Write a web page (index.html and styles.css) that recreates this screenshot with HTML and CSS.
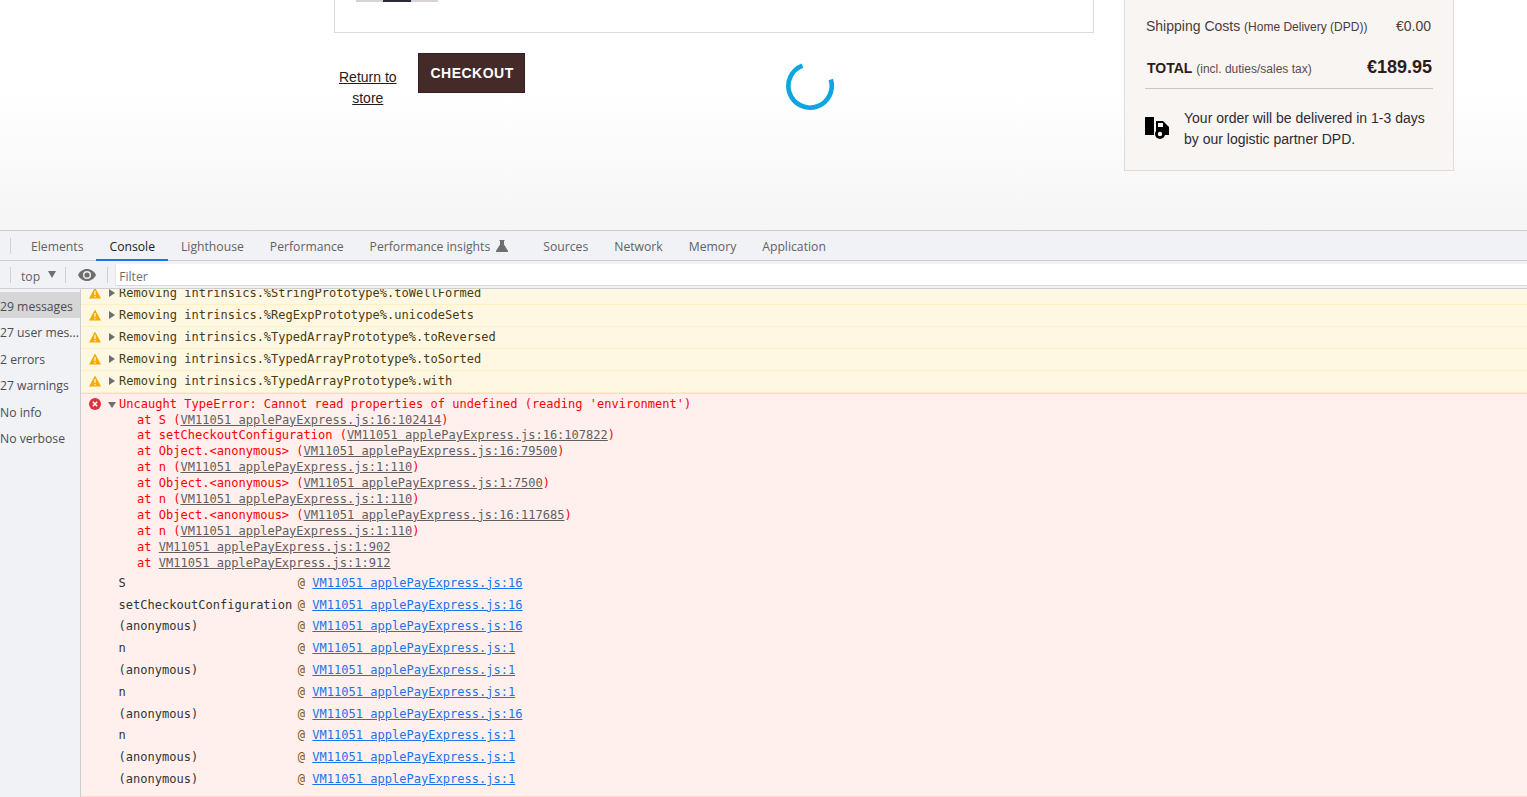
FILE: index.html
```html
<!DOCTYPE html>
<html lang="en">
<head>
    <meta charset="UTF-8">
    <title>Checkout - DevTools</title>
    <link rel="stylesheet" href="styles.css">
</head>
<body>
    <!-- Store page -->
    <div class="page">
        <div class="main-col">
            <div class="order-card">
                <div class="thumb"><span></span><span class="dark"></span><span></span></div>
            </div>
            <div class="checkout-row">
                <a href="#" class="return-link">Return to<br>store</a>
                <button class="checkout-btn">CHECKOUT</button>
                <svg class="spinner" width="48" height="48" viewBox="0 0 48 48"><path d="M44.8 17.5A21.7 21.7 0 1 1 16.5 3.6" fill="none" stroke="#0ea5e0" stroke-width="4.6"/></svg>
            </div>
        </div>
        <div class="summary">
            <div class="ship-row">
                <span>Shipping Costs <small>(Home Delivery (DPD))</small></span>
                <span>€0.00</span>
            </div>
            <div class="total-row">
                <span><b>TOTAL</b> <small>(incl. duties/sales tax)</small></span>
                <b class="total-price">€189.95</b>
            </div>
            <div class="delivery">
                <svg class="truck" width="24" height="24" viewBox="0 0 24 24">
                    <rect x="0" y="0" width="9" height="18"/>
                    <path d="M11 4h7l6 6v8H11z"/>
                    <rect x="13" y="6" width="5" height="4" fill="#f9f5f2"/>
                    <circle cx="15" cy="17" r="5" fill="#000"/>
                    <circle cx="15" cy="17" r="2.2" fill="#f9f5f2"/>
                </svg>
                <p>Your order will be delivered in 1-3 days<br>by our logistic partner DPD.</p>
            </div>
        </div>
    </div>

    <!-- DevTools -->
    <div class="devtools">
        <div class="tabs">
            <span class="sep"></span>
            <span class="tab">Elements</span>
            <span class="tab active">Console</span>
            <span class="tab">Lighthouse</span>
            <span class="tab">Performance</span>
            <span class="tab">Performance insights<svg class="flask" width="12" height="12" viewBox="0 0 12 12"><path d="M3.5 0h5v1H8v3.500l4 6.500v1H0v-1l4-6.500V1h-.5z" fill="#6e6e6e"/></svg></span>
            <span class="tab">Sources</span>
            <span class="tab">Network</span>
            <span class="tab">Memory</span>
            <span class="tab">Application</span>
        </div>
        <div class="toolbar">
            <span class="sep"></span>
            <span class="context">top</span>
            <span class="caret"></span>
            <span class="sep"></span>
            <svg class="eye" width="18" height="12" viewBox="0 0 18 12"><path d="M9 0c4 0 7.400 2.500 9 6-1.600 3.500-5 6-9 6s-7.400-2.500-9-6c1.600-3.500 5-6 9-6z" fill="#6e6e6e"/><circle cx="9" cy="6" r="4" fill="#f1f2f5"/><circle cx="9" cy="6" r="2.600" fill="#6e6e6e"/></svg>
            <span class="sep"></span>
            <div class="filter">Filter</div>
        </div>
        <div class="console">
            <div class="sidebar">
                <div class="side-item selected">29 messages</div>
                <div class="side-item">27 user mes...</div>
                <div class="side-item">2 errors</div>
                <div class="side-item">27 warnings</div>
                <div class="side-item">No info</div>
                <div class="side-item">No verbose</div>
            </div>
            <div class="messages">
                <div class="warn first"><svg class="warn-icon" width="12" height="12" viewBox="0 0 12 12"><path d="M6 .5l6 11H0z" fill="#f2ab00"/><path d="M5.400 4h1.200v4H5.400zM5.400 9h1.200v1.200H5.400z" fill="#fff"/></svg><i class="arrow"></i>Removing intrinsics.%StringPrototype%.toWellFormed</div>
                <div class="warn"><svg class="warn-icon" width="12" height="12" viewBox="0 0 12 12"><path d="M6 .5l6 11H0z" fill="#f2ab00"/><path d="M5.400 4h1.200v4H5.400zM5.400 9h1.200v1.200H5.400z" fill="#fff"/></svg><i class="arrow"></i>Removing intrinsics.%RegExpPrototype%.unicodeSets</div>
                <div class="warn"><svg class="warn-icon" width="12" height="12" viewBox="0 0 12 12"><path d="M6 .5l6 11H0z" fill="#f2ab00"/><path d="M5.400 4h1.200v4H5.400zM5.400 9h1.200v1.200H5.400z" fill="#fff"/></svg><i class="arrow"></i>Removing intrinsics.%TypedArrayPrototype%.toReversed</div>
                <div class="warn"><svg class="warn-icon" width="12" height="12" viewBox="0 0 12 12"><path d="M6 .5l6 11H0z" fill="#f2ab00"/><path d="M5.400 4h1.200v4H5.400zM5.400 9h1.200v1.200H5.400z" fill="#fff"/></svg><i class="arrow"></i>Removing intrinsics.%TypedArrayPrototype%.toSorted</div>
                <div class="warn"><svg class="warn-icon" width="12" height="12" viewBox="0 0 12 12"><path d="M6 .5l6 11H0z" fill="#f2ab00"/><path d="M5.400 4h1.200v4H5.400zM5.400 9h1.200v1.200H5.400z" fill="#fff"/></svg><i class="arrow"></i>Removing intrinsics.%TypedArrayPrototype%.with</div>
                <div class="error">
                    <div class="err-head"><svg class="err-icon" width="12" height="12" viewBox="0 0 12 12"><circle cx="6" cy="6" r="6" fill="#e0313a"/><path d="M3.800 3.800l4.400 4.400M8.200 3.800l-4.400 4.400" stroke="#fff" stroke-width="1.500"/></svg><i class="arrow open"></i>Uncaught TypeError: Cannot read properties of undefined (reading 'environment')</div>
                    <div class="trace">at S (<a href="#">VM11051 applePayExpress.js:16:102414</a>)</div>
                    <div class="trace">at setCheckoutConfiguration (<a href="#">VM11051 applePayExpress.js:16:107822</a>)</div>
                    <div class="trace">at Object.&lt;anonymous&gt; (<a href="#">VM11051 applePayExpress.js:16:79500</a>)</div>
                    <div class="trace">at n (<a href="#">VM11051 applePayExpress.js:1:110</a>)</div>
                    <div class="trace">at Object.&lt;anonymous&gt; (<a href="#">VM11051 applePayExpress.js:1:7500</a>)</div>
                    <div class="trace">at n (<a href="#">VM11051 applePayExpress.js:1:110</a>)</div>
                    <div class="trace">at Object.&lt;anonymous&gt; (<a href="#">VM11051 applePayExpress.js:16:117685</a>)</div>
                    <div class="trace">at n (<a href="#">VM11051 applePayExpress.js:1:110</a>)</div>
                    <div class="trace">at <a href="#">VM11051 applePayExpress.js:1:902</a></div>
                    <div class="trace">at <a href="#">VM11051 applePayExpress.js:1:912</a></div>
                    <div class="frames">
                        <span>S</span><span>@ <a href="#">VM11051 applePayExpress.js:16</a></span>
                        <span>setCheckoutConfiguration</span><span>@ <a href="#">VM11051 applePayExpress.js:16</a></span>
                        <span>(anonymous)</span><span>@ <a href="#">VM11051 applePayExpress.js:16</a></span>
                        <span>n</span><span>@ <a href="#">VM11051 applePayExpress.js:1</a></span>
                        <span>(anonymous)</span><span>@ <a href="#">VM11051 applePayExpress.js:1</a></span>
                        <span>n</span><span>@ <a href="#">VM11051 applePayExpress.js:1</a></span>
                        <span>(anonymous)</span><span>@ <a href="#">VM11051 applePayExpress.js:16</a></span>
                        <span>n</span><span>@ <a href="#">VM11051 applePayExpress.js:1</a></span>
                        <span>(anonymous)</span><span>@ <a href="#">VM11051 applePayExpress.js:1</a></span>
                        <span>(anonymous)</span><span>@ <a href="#">VM11051 applePayExpress.js:1</a></span>
                    </div>
                </div>
            </div>
        </div>
    </div>
</body>
</html>
```

FILE: styles.css
```css
html, body {
    height: 100%;
}
body {
    margin: 0;
    overflow: hidden;
    display: flex;
    flex-direction: column;
    background-color: white;
}

/* store page */
.page {
    height: 230px;
    flex-shrink: 0;
    display: flex;
    padding-left: 334px;
    box-sizing: border-box;
    overflow: hidden;
    font-family: "Liberation Sans", Arial, sans-serif;
    background: linear-gradient(#ffffff 40%, #f5f5f5 100%);
}
.main-col {
    width: 760px;
}
.order-card {
    height: 33px;
    box-sizing: border-box;
    background-color: white;
    border: 1px solid #dcdcdc;
    border-top: none;
    padding-left: 21px;
}
.thumb {
    display: flex;
    width: 82px;
    height: 2px;
}
.thumb span {
    flex: 1;
    background-color: #d9d2d4;
}
.thumb .dark {
    background-color: #2b2b3b;
}
.checkout-row {
    display: flex;
    align-items: flex-start;
    margin-top: 20px;
}
.return-link {
    margin: 14px 21px 0 5px;
    font-size: 14px;
    line-height: 21px;
    text-align: center;
    color: #2a1a1a;
}
.checkout-btn {
    width: 107px;
    height: 40px;
    padding: 0 0 0 2px;
    background-color: #442b2a;
    border: 1px solid #35201f;
    color: white;
    font-family: "Liberation Sans", Arial, sans-serif;
    font-size: 14px;
    font-weight: bold;
    letter-spacing: 0.5px;
}
.spinner {
    margin: 8.500px 0 0 261px;
}
.summary {
    width: 330px;
    height: 171px;
    margin-left: 30px;
    box-sizing: border-box;
    padding: 0 20px;
    background-color: #f9f5f2;
    border: 1px solid #e0dcdc;
    border-top: none;
    color: #4a3c3a;
    font-size: 14px;
}
.summary small {
    font-size: 12px;
}
.ship-row {
    display: flex;
    justify-content: space-between;
    padding: 16px 2px 0 1px;
    line-height: 20px;
}
.total-row {
    display: flex;
    justify-content: space-between;
    align-items: center;
    height: 52px;
    padding: 10px 1px 0 2px;
    box-sizing: border-box;
    border-bottom: 1px solid #cfc6c4;
    color: #2d1c1b;
}
.total-row small {
    color: #5a4c4a;
}
.total-price {
    font-size: 18px;
}
.delivery {
    display: flex;
    align-items: center;
    margin-top: 19px;
    color: #2d2a35;
}
.delivery p {
    margin: 0 0 0 15px;
    line-height: 21px;
}
.truck {
    flex-shrink: 0;
}

/* devtools */
.devtools {
    flex: 1;
    min-height: 0;
    display: flex;
    flex-direction: column;
    font-family: "Open Sans", "Noto Sans", sans-serif;
    font-size: 12.200px;
    color: #5f6368;
}
.sep {
    width: 1px;
    height: 16px;
    background-color: #cdd0d4;
    flex-shrink: 0;
}
.tabs {
    display: flex;
    align-items: center;
    height: 31px;
    flex-shrink: 0;
    box-sizing: border-box;
    padding-left: 10px;
    background-color: #f1f2f5;
    border-top: 1px solid #ccced2;
    border-bottom: 1px solid #ccced2;
}
.tabs .sep {
    margin-right: 7px;
}
.tab {
    height: 29px;
    line-height: 32px;
    padding: 0 13px;
    box-sizing: border-box;
    white-space: nowrap;
}
.tab.active {
    color: #202124;
    border-bottom: 2px solid #1a73e8;
    height: 30px;
    margin-bottom: -1px;
}
.flask {
    margin-left: 6px;
    margin-right: 9px;
    vertical-align: -1px;
}
.toolbar {
    display: flex;
    align-items: center;
    height: 28px;
    box-sizing: border-box;
    padding: 3px 0 2px 10px;
    background-color: #f1f2f5;
    border-bottom: 1px solid #ccced2;
    flex-shrink: 0;
}
.context {
    margin-left: 10px;
    padding-top: 2px;
}
.caret {
    width: 0;
    height: 0;
    margin: 0 9px 2px 8px;
    border-left: 4.500px solid transparent;
    border-right: 4.500px solid transparent;
    border-top: 7px solid #6e6e6e;
}
.eye {
    margin: 0 11px 0 12px;
}
.filter {
    flex: 1;
    height: 22px;
    line-height: 25px;
    margin-left: 7px;
    padding-left: 3px;
    box-sizing: border-box;
    background-color: white;
    border-left: 1px solid #e4e6e8;
    border-bottom: 1px solid #d8dade;
    color: #6e6e6e;
}
.console {
    flex: 1;
    min-height: 0;
    display: flex;
    overflow: hidden;
}
.sidebar {
    width: 81px;
    flex-shrink: 0;
    box-sizing: border-box;
    padding-top: 3px;
    background-color: #f1f2f5;
    border-right: 1px solid #ccced2;
    overflow: hidden;
}
.side-item {
    height: 26.400px;
    line-height: 30px;
    white-space: nowrap;
    color: #4a4d52;
}
.side-item.selected {
    background-color: #d6d6d6;
}
.messages {
    flex: 1;
    min-width: 0;
    font-family: "DejaVu Sans Mono", "Liberation Mono", monospace;
    font-size: 12.040px;
    white-space: nowrap;
}
.warn {
    height: 22px;
    box-sizing: border-box;
    padding-left: 8px;
    display: flex;
    align-items: center;
    background-color: #fef8e3;
    border-bottom: 1px solid #fdf0c2;
    color: #4a3a10;
}
.warn.first {
    margin-top: -6.500px;
}
.warn-icon, .err-icon {
    flex-shrink: 0;
    margin-right: 8px;
}
.arrow {
    flex-shrink: 0;
    width: 0;
    height: 0;
    margin-right: 4px;
    border-top: 4px solid transparent;
    border-bottom: 4px solid transparent;
    border-left: 6px solid #6e6e6e;
}
.arrow.open {
    margin: 1px 3px 0 -1px;
    border-left: 4px solid transparent;
    border-right: 4px solid transparent;
    border-top: 6px solid #6e6e6e;
    border-bottom: none;
}
.error {
    background-color: #fff0ee;
    border-bottom: 1px solid #ffd6d6;
    border-top: 1px solid #ffd6d6;
    color: #f00;
    padding: 2.500px 0 6px;
}
.err-head {
    display: flex;
    align-items: center;
    height: 16.500px;
    padding-left: 8px;
}
.trace {
    height: 15.900px;
    line-height: 15.900px;
    padding-left: 56px;
}
.trace a {
    color: #5f5f5f;
}
.frames {
    display: grid;
    grid-template-columns: max-content 1fr;
    grid-auto-rows: 21.800px;
    column-gap: 5.500px;
    align-items: center;
    padding-left: 37.500px;
    margin-top: 0.500px;
    color: #333;
}
.frames span:nth-child(even) {
    color: #7a5a20;
}
.frames a {
    color: #1a73e8;
}
```
